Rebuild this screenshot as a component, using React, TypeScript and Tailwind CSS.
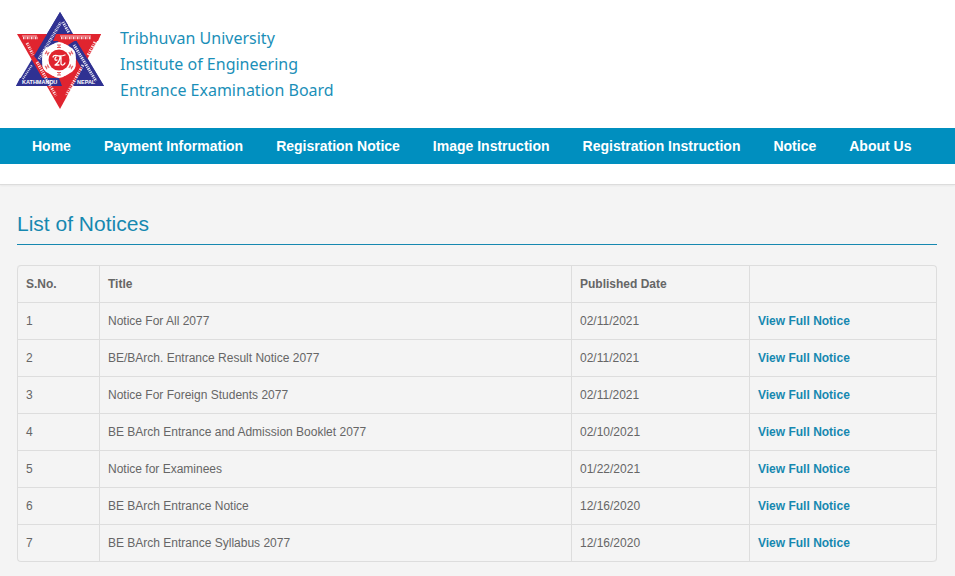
const navItems = [
  "Home",
  "Payment Information",
  "Regisration Notice",
  "Image Instruction",
  "Registration Instruction",
  "Notice",
  "About Us",
];

const notices = [
  { id: 1, title: "Notice For All 2077", date: "02/11/2021" },
  { id: 2, title: "BE/BArch. Entrance Result Notice 2077", date: "02/11/2021" },
  { id: 3, title: "Notice For Foreign Students 2077", date: "02/11/2021" },
  { id: 4, title: "BE BArch Entrance and Admission Booklet 2077", date: "02/10/2021" },
  { id: 5, title: "Notice for Examinees", date: "01/22/2021" },
  { id: 6, title: "BE BArch Entrance Notice", date: "12/16/2020" },
  { id: 7, title: "BE BArch Entrance Syllabus 2077", date: "12/16/2020" },
];

const petals = [0, 60, 120, 180, 240, 300];

const Logo = () => (
  <svg
    viewBox="0 0 100 110"
    className="h-[110px] w-[100px] shrink-0"
    role="img"
    aria-label="Tribhuvan University"
  >
    {/* Two interlaced triangles */}
    <polygon points="50,7 94,81 6,81" fill="#2f3192" />
    <polygon points="7,29 91,29 50,104" fill="#e0242f" />
    <polygon points="50,7 58,20 33,62 24,51" fill="#2f3192" />
    <polygon points="66,35 94,81 82,81 58,40" fill="#2f3192" />
    <polygon points="10,73 49,73 52,81 6,81" fill="#2f3192" />
    <polygon points="46,29 91,29 88,36 43,36" fill="#e0242f" />

    {/* Seal */}
    {petals.map((angle) => (
      <circle key={angle} cx="49" cy="46" r="9" fill="#fff" transform={`rotate(${angle} 49 55)`} />
    ))}
    <circle cx="49" cy="55" r="17" fill="#fff" />
    {petals.map((angle) => (
      <path
        key={angle}
        d="M47 42.500h4M47 40h4M49 40v3"
        stroke="#e55a5f"
        strokeWidth="1"
        fill="none"
        transform={`rotate(${angle} 49 55)`}
      />
    ))}
    <circle cx="49" cy="55" r="10.500" fill="#e0242f" />
    <path
      d="M43 52c1-3 4-1 6-1s4 0 6-1M46 52c-2 2-1 4 1 3M50 52c0 4-2 6-5 8M51 52v7c1 2 3 1 4-1M45 60h4"
      stroke="#fff"
      strokeWidth="1.300"
      fill="none"
      strokeLinecap="round"
    />

    {/* Lettering around the star */}
    <g stroke="#fff" fill="none" opacity="0.85">
      <path d="M12 31h15M50 31h31" strokeWidth="0.800" />
      <path d="M13 33h15M51 33h30" strokeWidth="2.500" strokeDasharray="1.500 1 0.800 0.700" />
      <path d="M29 54L51 17" strokeWidth="3" strokeDasharray="1 0.900 0.600 0.800" />
      <path d="M53 17l6 11M64 40l22 36" strokeWidth="3" strokeDasharray="1 0.900 1.500 0.800" />
      <path d="M85 37l-7 13M73 60L56 91" strokeWidth="3" strokeDasharray="1.500 1.200 0.700 1" />
      <path d="M17 38l6 12M27 57l19 34" strokeWidth="3" strokeDasharray="1.400 1 0.700 1.200" />
      <path d="M13 74l9-14" strokeWidth="2" strokeDasharray="1 0.900" />
    </g>
    <g
      fill="#fff"
      fontFamily="Liberation Sans, sans-serif"
      fontWeight="bold"
      fontSize="5.500"
    >
      <text x="12" y="79">KATHMANDU</text>
      <text x="67" y="79">NEPAL</text>
    </g>
  </svg>
);

const Header = () => (
  <header className="border-b border-[#dcdcdc] bg-white pb-5 shadow-xs">
    <div className="flex h-32 items-start px-[10px] pt-[5px]">
      <Logo />
      <div className="ml-[10px] mt-5 font-['Noto_Sans',sans-serif] text-base leading-[26px] text-[#1b8fb8]">
        <p>Tribhuvan University</p>
        <p>Institute of Engineering</p>
        <p>Entrance Examination Board</p>
      </div>
    </div>
    <nav className="bg-[#008fbf] px-8">
      <ul className="flex gap-[33px]">
        {navItems.map((item) => (
          <li key={item}>
            <a href="#" className="block whitespace-nowrap text-sm font-bold leading-9 text-white">
              {item}
            </a>
          </li>
        ))}
      </ul>
    </nav>
  </header>
);

const cell = "h-[37px] border-b border-l border-[#dddddd] px-2 text-left";

const NoticeTable = () => (
  <table className="mt-5 w-full table-fixed border-separate border-spacing-0 rounded-sm border border-b-0 border-l-0 border-[#dddddd] text-xs">
    <colgroup>
      <col className="w-[82px]" />
      <col />
      <col className="w-[178px]" />
      <col className="w-[187px]" />
    </colgroup>
    <thead>
      <tr>
        <th className={`${cell} rounded-tl-sm`}>S.No.</th>
        <th className={cell}>Title</th>
        <th className={cell}>Published Date</th>
        <th className={cell} aria-label="Link"></th>
      </tr>
    </thead>
    <tbody>
      {notices.map((notice) => (
        <tr key={notice.id} className="group">
          <td className={`${cell} group-last:rounded-bl-sm`}>{notice.id}</td>
          <td className={cell}>{notice.title}</td>
          <td className={cell}>{notice.date}</td>
          <td className={`${cell} group-last:rounded-br-sm`}>
            <a href="#" className="font-bold text-[#1688b0]">
              View Full Notice
            </a>
          </td>
        </tr>
      ))}
    </tbody>
  </table>
);

export default function App() {
  return (
    <div className="min-h-screen bg-[#f4f4f4] font-['Liberation_Sans',Arial,sans-serif] text-[#666666]">
      <Header />
      <main className="pb-3 pl-[17px] pr-[18px] pt-6">
        <h1 className="border-b border-[#1688b0] pb-[5px] text-[21px] leading-[30px] text-[#1688b0]">
          List of Notices
        </h1>
        <NoticeTable />
      </main>
    </div>
  );
}
